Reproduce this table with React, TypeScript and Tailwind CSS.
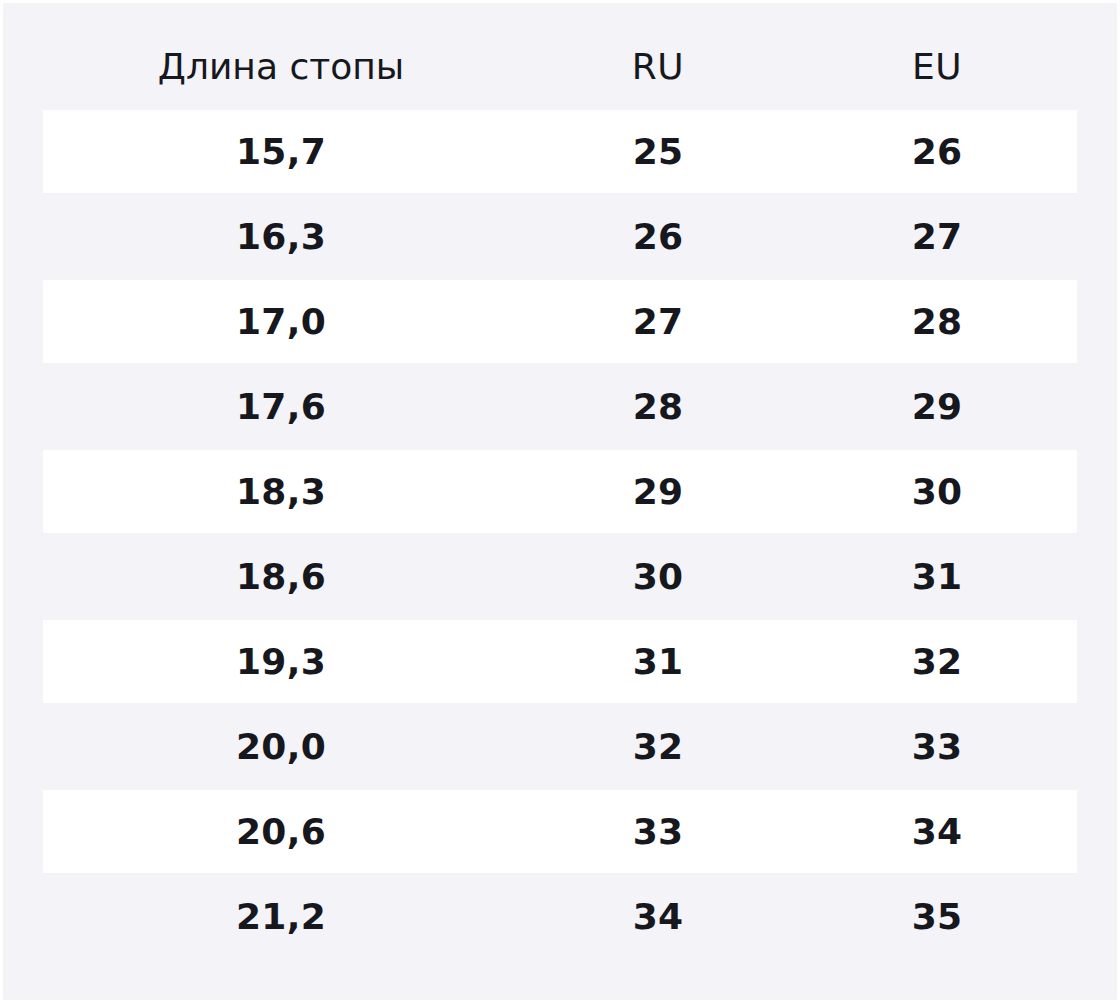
const rows = [
  ['15,7', '25', '26'],
  ['16,3', '26', '27'],
  ['17,0', '27', '28'],
  ['17,6', '28', '29'],
  ['18,3', '29', '30'],
  ['18,6', '30', '31'],
  ['19,3', '31', '32'],
  ['20,0', '32', '33'],
  ['20,6', '33', '34'],
  ['21,2', '34', '35'],
];

export default function App() {
  return (
    <div
      className="bg-white p-[3px] text-[#17171e]"
      style={{ fontFamily: '"DejaVu Sans", sans-serif' }}
    >
      <div className="bg-[#f3f3f8] px-[40px] pt-[21px] pb-[41px]">
        {/* шапка */}
        <div className="grid h-[85px] grid-cols-[476px_278px_280px] items-center text-center text-[36px]">
          <div>Длина стопы</div>
          <div className="tracking-[0.5px]">RU</div>
          <div className="tracking-[0.5px]">EU</div>
        </div>

        {rows.map((row, i) => (
          <div key={row[0]} className="h-[85px] py-px">
            <div
              className={`grid h-full grid-cols-[476px_278px_280px] items-center text-center text-[36px] font-bold tracking-[0.3px] ${
                i % 2 === 0 ? 'bg-white' : ''
              }`}
            >
              {row.map((cell, j) => (
                <div key={j}>{cell}</div>
              ))}
            </div>
          </div>
        ))}
      </div>
    </div>
  );
}
